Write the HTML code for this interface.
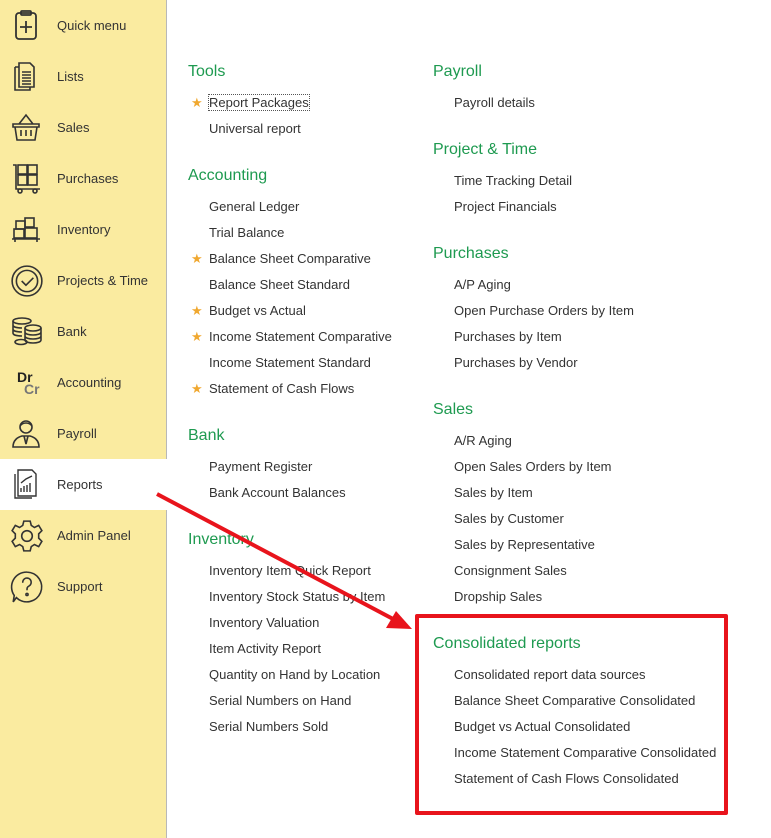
<!DOCTYPE html>
<html><head><style>
body{margin:0;width:771px;height:838px;background:#fff;font-family:"Liberation Sans",sans-serif;position:relative;overflow:hidden}
#sb{position:absolute;left:0;top:0;width:166px;height:838px;background:#faeba0;border-right:1px solid #b8b8b8}
.it{position:absolute;left:0;width:166px;height:51px;font-size:13px;color:#333}
.it span{position:absolute;left:57px;top:18px}
.it svg{position:absolute;left:10px;top:9px}
.act{background:#fff;width:167px}
.h{position:absolute;font-size:16px;color:#1e9a50}
.l{position:absolute;font-size:13px;color:#333}
.s{position:absolute;color:#f0a830;font-size:13px}
</style></head><body>
<div id="sb">
<div class="it" style="top:0"><svg width="32" height="32" viewBox="0 0 32 32" fill="none" stroke="#333" stroke-width="1.8"><rect x="6" y="4" width="20" height="26" rx="3"/><rect x="11" y="2" width="10" height="4" rx="1"/><path d="M16 12v12M10 18h12"/></svg><span>Quick menu</span></div>
<div class="it" style="top:51px"><svg width="32" height="32" viewBox="0 0 32 32" fill="none" stroke="#333" stroke-width="1.6"><path d="M9 3h11l4 4v20H9z"/><path d="M5 7h4M5 7v23h15v-3"/><path d="M12 12h9M12 15h9M12 18h9M12 21h9M12 24h9"/></svg><span>Lists</span></div>
<div class="it" style="top:102px"><svg width="32" height="32" viewBox="0 0 32 32" fill="none" stroke="#333" stroke-width="1.6"><path d="M3 13h26v3H3zM5 16l2 13h18l2-13M9 13l7-9 7 9M11 19v6M16 19v6M21 19v6"/></svg><span>Sales</span></div>
<div class="it" style="top:153px"><svg width="32" height="32" viewBox="0 0 32 32" fill="none" stroke="#333" stroke-width="1.6"><path d="M3 3h3v24h24"/><rect x="8" y="3" width="9" height="9"/><rect x="18" y="3" width="9" height="9"/><rect x="8" y="13" width="9" height="10"/><rect x="18" y="13" width="9" height="10"/><circle cx="10" cy="29" r="2"/><circle cx="25" cy="29" r="2"/></svg><span>Purchases</span></div>
<div class="it" style="top:204px"><svg width="32" height="32" viewBox="0 0 32 32" fill="none" stroke="#333" stroke-width="1.6"><rect x="6" y="8" width="9" height="8"/><rect x="15" y="5" width="9" height="9"/><rect x="4" y="16" width="10" height="9"/><rect x="15" y="15" width="12" height="10"/><path d="M2 26h28M5 26v3M27 26v3"/></svg><span>Inventory</span></div>
<div class="it" style="top:255px"><svg width="34" height="34" viewBox="0 0 32 32" fill="none" stroke="#333" stroke-width="1.5"><circle cx="16" cy="16" r="14"/><circle cx="16" cy="16" r="10"/><path d="M11 16l4 4 7-7"/></svg><span>Projects &amp; Time</span></div>
<div class="it" style="top:306px"><svg width="34" height="32" viewBox="0 0 34 32" fill="none" stroke="#333" stroke-width="1.6"><ellipse cx="12" cy="6" rx="9" ry="3"/><path d="M3 6v12c0 2 4 3 9 3M3 10c0 2 4 3 9 3M3 14c0 2 4 3 9 3"/><ellipse cx="23" cy="13" rx="8" ry="3"/><path d="M15 13v12c0 2 4 3 8 3s8-1 8-3V13M15 17c0 2 4 3 8 3s8-1 8-3M15 21c0 2 4 3 8 3s8-1 8-3"/><ellipse cx="11" cy="27" rx="6" ry="2.5"/></svg><span>Bank</span></div>
<div class="it" style="top:357px"><div style="position:absolute;left:17px;top:12px;font-weight:bold;font-size:14px;color:#222">Dr</div><div style="position:absolute;left:24px;top:24px;font-weight:bold;font-size:14px;color:#777">Cr</div><span>Accounting</span></div>
<div class="it" style="top:408px"><svg width="32" height="32" viewBox="0 0 32 32" fill="none" stroke="#333" stroke-width="1.6"><circle cx="16" cy="10" r="6"/><path d="M10 9c3-4 9-4 12 0"/><path d="M3 30c0-7 5-10 9-11h8c4 1 9 4 9 11z"/><path d="M14 19l2 8 2-8"/></svg><span>Payroll</span></div>
<div class="it act" style="top:459px"><svg width="32" height="32" viewBox="0 0 32 32" fill="none" stroke="#333" stroke-width="1.4"><path d="M8 2h14l4 4v22H8z"/><path d="M5 6v24h17"/><path d="M11 24v-4M14 24v-6M17 24v-7M20 24v-9M11 15l5-4 6-3"/></svg><span>Reports</span></div>
<div class="it" style="top:510px"><svg width="34" height="34" viewBox="0 0 32 32" fill="none" stroke="#333" stroke-width="1.5"><path d="M13 2h6l1 4 3 2 4-2 3 5-3 3v4l3 3-3 5-4-2-3 2-1 4h-6l-1-4-3-2-4 2-3-5 3-3v-4l-3-3 3-5 4 2 3-2z"/><circle cx="16" cy="16" r="5"/></svg><span>Admin Panel</span></div>
<div class="it" style="top:561px"><svg width="34" height="34" viewBox="0 0 32 32" fill="none" stroke="#333" stroke-width="1.5"><path d="M16 2a14 14 0 1 1-10 24l-3 4 1-6A14 14 0 0 1 16 2z"/><path d="M12 12a4 4 0 1 1 6 3c-2 1-2 2-2 4"/><circle cx="16" cy="23" r="1"/></svg><span>Support</span></div>
</div>

<div class="h" style="left:188px;top:63px">Tools</div>
<div class="s" style="left:191px;top:95px">★</div><div class="l" style="left:209px;top:95px;border:1px dotted #555;margin:-1px">Report Packages</div>
<div class="l" style="left:209px;top:121px">Universal report</div>
<div class="h" style="left:188px;top:167px">Accounting</div>
<div class="l" style="left:209px;top:199px">General Ledger</div>
<div class="l" style="left:209px;top:225px">Trial Balance</div>
<div class="s" style="left:191px;top:251px">★</div><div class="l" style="left:209px;top:251px">Balance Sheet Comparative</div>
<div class="l" style="left:209px;top:277px">Balance Sheet Standard</div>
<div class="s" style="left:191px;top:303px">★</div><div class="l" style="left:209px;top:303px">Budget vs Actual</div>
<div class="s" style="left:191px;top:329px">★</div><div class="l" style="left:209px;top:329px">Income Statement Comparative</div>
<div class="l" style="left:209px;top:355px">Income Statement Standard</div>
<div class="s" style="left:191px;top:381px">★</div><div class="l" style="left:209px;top:381px">Statement of Cash Flows</div>
<div class="h" style="left:188px;top:427px">Bank</div>
<div class="l" style="left:209px;top:459px">Payment Register</div>
<div class="l" style="left:209px;top:485px">Bank Account Balances</div>
<div class="h" style="left:188px;top:531px">Inventory</div>
<div class="l" style="left:209px;top:563px">Inventory Item Quick Report</div>
<div class="l" style="left:209px;top:589px">Inventory Stock Status by Item</div>
<div class="l" style="left:209px;top:615px">Inventory Valuation</div>
<div class="l" style="left:209px;top:641px">Item Activity Report</div>
<div class="l" style="left:209px;top:667px">Quantity on Hand by Location</div>
<div class="l" style="left:209px;top:693px">Serial Numbers on Hand</div>
<div class="l" style="left:209px;top:719px">Serial Numbers Sold</div>

<div class="h" style="left:433px;top:63px">Payroll</div>
<div class="l" style="left:454px;top:95px">Payroll details</div>
<div class="h" style="left:433px;top:141px">Project &amp; Time</div>
<div class="l" style="left:454px;top:173px">Time Tracking Detail</div>
<div class="l" style="left:454px;top:199px">Project Financials</div>
<div class="h" style="left:433px;top:245px">Purchases</div>
<div class="l" style="left:454px;top:277px">A/P Aging</div>
<div class="l" style="left:454px;top:303px">Open Purchase Orders by Item</div>
<div class="l" style="left:454px;top:329px">Purchases by Item</div>
<div class="l" style="left:454px;top:355px">Purchases by Vendor</div>
<div class="h" style="left:433px;top:401px">Sales</div>
<div class="l" style="left:454px;top:433px">A/R Aging</div>
<div class="l" style="left:454px;top:459px">Open Sales Orders by Item</div>
<div class="l" style="left:454px;top:485px">Sales by Item</div>
<div class="l" style="left:454px;top:511px">Sales by Customer</div>
<div class="l" style="left:454px;top:537px">Sales by Representative</div>
<div class="l" style="left:454px;top:563px">Consignment Sales</div>
<div class="l" style="left:454px;top:589px">Dropship Sales</div>
<div class="h" style="left:433px;top:635px">Consolidated reports</div>
<div class="l" style="left:454px;top:667px">Consolidated report data sources</div>
<div class="l" style="left:454px;top:693px">Balance Sheet Comparative Consolidated</div>
<div class="l" style="left:454px;top:719px">Budget vs Actual Consolidated</div>
<div class="l" style="left:454px;top:745px">Income Statement Comparative Consolidated</div>
<div class="l" style="left:454px;top:771px">Statement of Cash Flows Consolidated</div>

<div style="position:absolute;left:415px;top:614px;width:305px;height:193px;border:4px solid #e8141c;border-radius:2px"></div>
<svg style="position:absolute;left:0;top:0" width="771" height="838"><line x1="157" y1="494" x2="395" y2="620" stroke="#e8141c" stroke-width="4"/><polygon points="412,629 386,628 396,611" fill="#e8141c"/></svg>
</body></html>
